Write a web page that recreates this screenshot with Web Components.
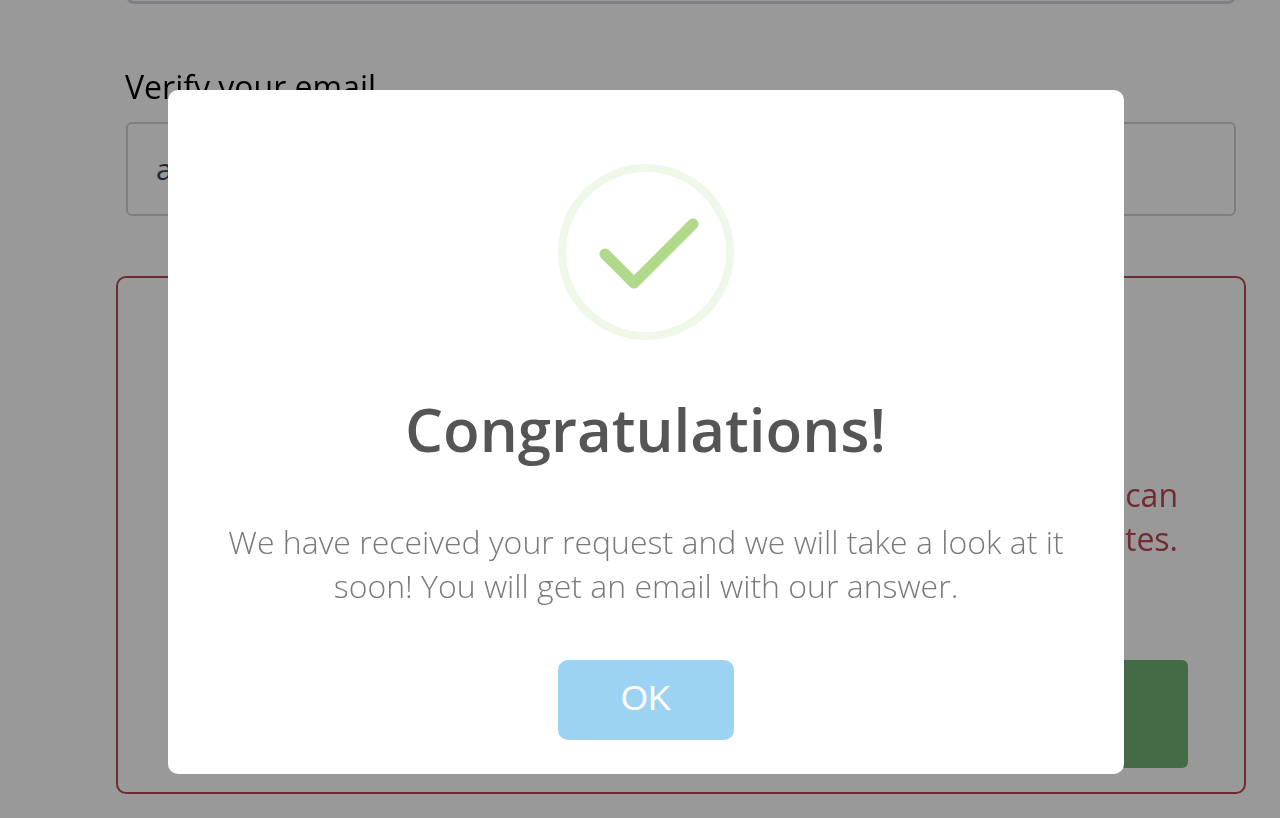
<!DOCTYPE html>
<html>
<head>
<meta charset="utf-8">
<title>Verify your email</title>
<style>
    html, body { margin: 0; height: 100%; overflow: hidden; background: #fff; }
    body { font-family: "Open Sans", "Liberation Sans", sans-serif; }
</style>
</head>
<body>
<verify-form>
    <span slot="label">Verify your email</span>
    <span slot="email">a</span>
    <span slot="line1">can</span>
    <span slot="line2">tes.</span>
</verify-form>
<alert-modal>
    <span slot="title">Congratulations!</span>
    We have received your request and we will take a look at it soon! You will get an email with our answer.
    <span slot="confirm">OK</span>
</alert-modal>

<script>
class VerifyForm extends HTMLElement {
    constructor() {
        super();
        this.attachShadow({ mode: "open" });
        this.shadowRoot.innerHTML = `
            <style>
                :host { display: block; padding: 0 34px 0 116px; }
                .prev {
                    margin: -32px 10px 0;
                    height: 30px;
                    border: 3px solid #d0d5e8;
                    border-radius: 8px;
                    background: #fff;
                }
                label {
                    display: block;
                    margin: 58px 0 0 9px;
                    height: 60px;
                    font-size: 32px;
                    line-height: 50px;
                    color: #000;
                    will-change: transform;
                }
                .input {
                    display: flex;
                    align-items: center;
                    box-sizing: border-box;
                    height: 94px;
                    margin: 0 10px;
                    padding: 0 28px 2px;
                    border: 2px solid #d4d4d4;
                    border-radius: 6px;
                    font-size: 30px;
                    color: #3f4450;
                }
                .warn {
                    box-sizing: border-box;
                    height: 518px;
                    margin-top: 60px;
                    padding: 195px 56px 24px 48px;
                    border: 2px solid #b94855;
                    border-radius: 10px;
                    color: #bf4655;
                    font-size: 32px;
                    line-height: 44px;
                }
                .warn p {
                    margin: 0;
                    display: flex;
                    flex-direction: column;
                    align-items: flex-end;
                    padding-right: 10px;
                    will-change: transform;
                }
                .action { margin: 99px 0 0 auto; width: 320px; height: 108px; border-radius: 6px; background: #70b276; }
            </style>
            <div class="prev"></div>
            <label><slot name="label"></slot></label>
            <div class="input"><slot name="email"></slot></div>
            <div class="warn">
                <p><slot name="line1"></slot><slot name="line2"></slot></p>
                <div class="action"></div>
            </div>
        `;
    }
}

class CheckIcon extends HTMLElement {
    constructor() {
        super();
        this.attachShadow({ mode: "open" });
        this.shadowRoot.innerHTML = `
            <style>
                :host { display: block; width: 176px; height: 176px; }
                svg { display: block; }
            </style>
            <svg width="176" height="176" viewBox="0 0 176 176">
                <circle cx="88" cy="88" r="84" fill="none" stroke="#eff7e9" stroke-width="8"/>
                <path d="M47 90 L76 119 L135 60" fill="none" stroke="#b0d98c" stroke-width="11" stroke-linecap="round" stroke-linejoin="round"/>
            </svg>
        `;
    }
}

class AlertModal extends HTMLElement {
    constructor() {
        super();
        this.attachShadow({ mode: "open" });
        this.shadowRoot.innerHTML = `
            <style>
                :host {
                    position: fixed;
                    inset: 0;
                    display: block;
                    background: rgba(0, 0, 0, .4);
                }
                .modal {
                    position: absolute;
                    left: 168px;
                    top: 90px;
                    box-sizing: border-box;
                    width: 956px;
                    height: 684px;
                    padding: 74px 40px 0;
                    display: flex;
                    flex-direction: column;
                    align-items: center;
                    background: #fff;
                    border-radius: 10px;
                }
                h2 {
                    margin: 49px 0 0;
                    font-size: 60px;
                    line-height: 80px;
                    font-weight: 600;
                    color: #555;
                    will-change: transform;
                }
                p {
                    margin: 51px 0 0;
                    font-size: 32px;
                    line-height: 44px;
                    font-weight: 300;
                    color: #797979;
                    text-align: center;
                    will-change: transform;
                }
                button {
                    margin-top: 52px;
                    width: 176px;
                    height: 80px;
                    padding: 0 0 4px;
                    border: 0;
                    border-radius: 10px;
                    background: #9dd3f2;
                    color: #fff;
                    font: 35px "Liberation Sans", Arial, sans-serif;
                }
            </style>
            <div class="modal">
                <check-icon></check-icon>
                <h2><slot name="title"></slot></h2>
                <p><slot></slot></p>
                <button><slot name="confirm"></slot></button>
            </div>
        `;
    }
}

customElements.define("verify-form", VerifyForm);
customElements.define("check-icon", CheckIcon);
customElements.define("alert-modal", AlertModal);
</script>
</body>
</html>
